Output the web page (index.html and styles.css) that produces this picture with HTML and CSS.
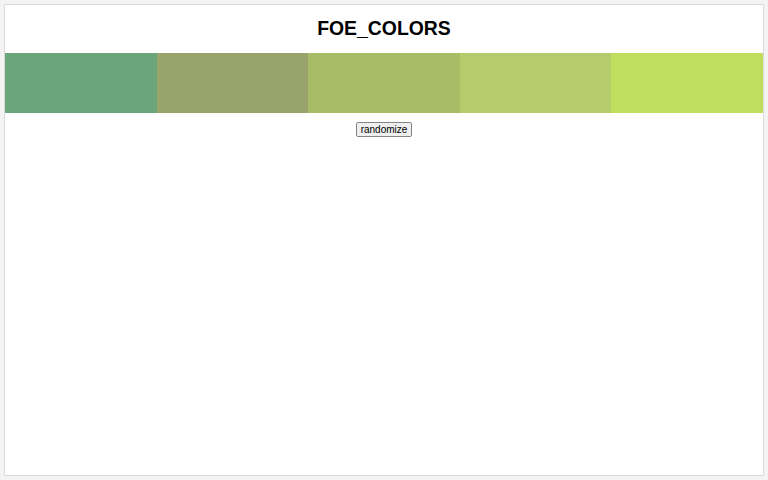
FILE: index.html
```html
<!DOCTYPE html>
<html lang="en">
<head>
  <meta charset="UTF-8">
  <meta name="viewport" content="width=device-width, initial-scale=1.0">
  <title>FOE_COLORS</title>
  <link rel="stylesheet" href="styles.css">
</head>
<body>

  <div class="card">
    <h1 class="title">FOE_COLORS</h1>

    <div class="palette">
      <div class="swatch swatch1"></div>
      <div class="swatch swatch2"></div>
      <div class="swatch swatch3"></div>
      <div class="swatch swatch4"></div>
      <div class="swatch swatch5"></div>
    </div>

    <div class="controls">
      <button id="randomizeBtn">randomize</button>
    </div>
  </div>

</body>
</html>
```

FILE: styles.css
```css
html, body {
  height: 100%;
}

body {
  margin: 0;
  padding: 4px;
  box-sizing: border-box;
  background-color: #f3f3f3;
  font-family: "Liberation Sans", Arial, sans-serif;
}

.card {
  height: 100%;
  box-sizing: border-box;
  background-color: #fff;
  border: 1px solid #dcdcdc;
}

.title {
  margin: 0;
  padding-top: 12px;
  text-align: center;
  font-size: 19.4px;
  font-weight: bold;
  line-height: 22px;
  color: #000;
}

.palette {
  display: flex;
  height: 60px;
  margin-top: 14px;
}

.swatch {
  flex: 1;
}

.swatch1 { background-color: #6aa67a; }
.swatch2 { background-color: #98a46c; }
.swatch3 { background-color: #a8bc68; }
.swatch4 { background-color: #b4cc6c; }
.swatch5 { background-color: #c0de5e; }

.controls {
  text-align: center;
  padding-top: 6px;
}

#randomizeBtn {
  font-family: "Liberation Sans", Arial, sans-serif;
  font-size: 10px;
  padding: 1px 4px;
  border: 1px solid #858585;
  border-radius: 2px;
  background-color: #efefef;
  color: #000;
}
```
